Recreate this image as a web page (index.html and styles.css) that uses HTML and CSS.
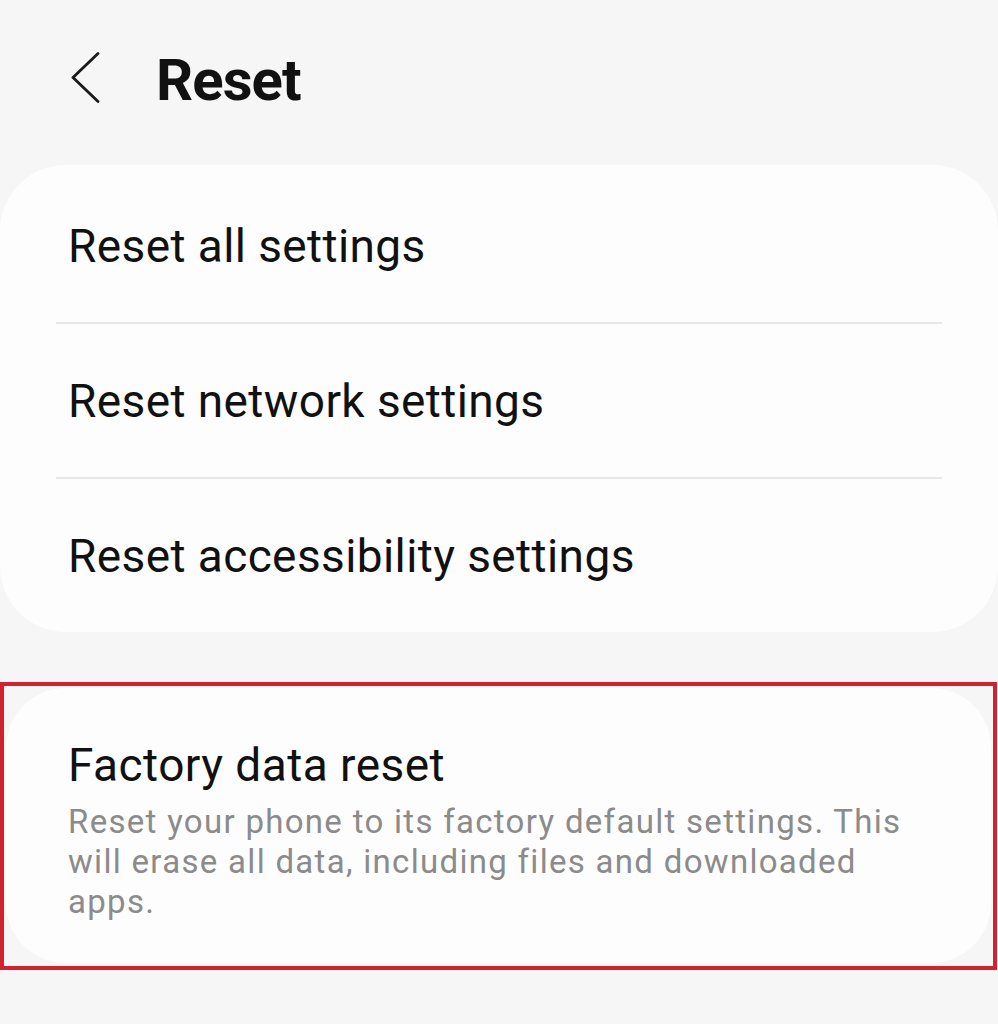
FILE: index.html
```html
<!DOCTYPE html>
<html lang="en">
<head>
<meta charset="utf-8">
<title>Reset</title>
<link rel="stylesheet" href="styles.css">
</head>
<body>
  <header class="topbar">
    <svg class="back" width="30" height="52" viewBox="0 0 30 52" aria-hidden="true">
      <polyline points="27,1.5 2,25.5 27,49.5" fill="none" stroke="#1a1a1a" stroke-width="2.8" stroke-linecap="round" stroke-linejoin="round"/>
    </svg>
    <h1 class="title">Reset</h1>
  </header>

  <section class="card list">
    <div class="row">Reset all settings</div>
    <div class="divider"></div>
    <div class="row">Reset network settings</div>
    <div class="divider"></div>
    <div class="row">Reset accessibility settings</div>
  </section>

  <div class="highlight">
    <section class="card factory">
      <div class="item-title">Factory data reset</div>
      <div class="item-sub">Reset your phone to its factory default settings. This will erase all data, including files and downloaded apps.</div>
    </section>
  </div>
</body>
</html>
```

FILE: styles.css
```css
html, body {
  margin: 0;
  padding: 0;
}

body {
  background: #f6f6f6;
  font-family: Roboto, "Noto Sans", "Liberation Sans", sans-serif;
  color: #111111;
  width: 998px;
  height: 1024px;
  overflow: hidden;
}

.topbar {
  display: flex;
  align-items: flex-start;
  padding: 45px 0 0 71px;
  height: 70px;
  margin-bottom: 50px;
}

.back {
  margin-top: 7px;
  flex: none;
}

.title {
  margin: 0 0 0 55px;
  font-size: 58px;
  line-height: 70px;
  font-weight: 700;
  letter-spacing: -0.9px;
  color: #111111;
}

.card {
  background: #fdfdfd;
  border-radius: 66px;
}

.list {
  padding-top: 4px;
}

.row {
  padding: 50px 68px 49px;
  font-size: 46px;
  line-height: 54px;
  letter-spacing: 0.4px;
  color: #111111;
}

.divider {
  height: 2px;
  margin: 0 56px;
  background: #e7e7e7;
}

.highlight {
  margin: 50px 1px 0 0;
  border: 4px solid #d3222f;
  padding: 2px 2px 3px 2px;
}

.factory {
  padding: 50px 70px 41px 62px;
  border-radius: 60px;
}

.item-title {
  font-size: 46px;
  line-height: 54px;
  letter-spacing: 0.45px;
  color: #111111;
}

.item-sub {
  margin-top: 10px;
  font-size: 33px;
  line-height: 40px;
  letter-spacing: 1.3px;
  color: #8b8b8b;
}
```
